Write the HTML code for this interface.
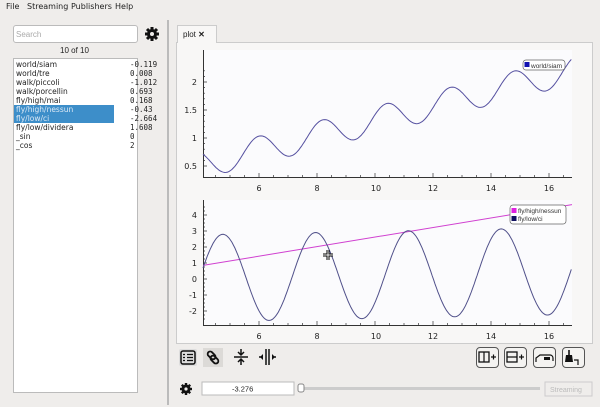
<!DOCTYPE html>
<html><head><meta charset="utf-8"><style>
*{margin:0;padding:0;box-sizing:border-box}
body{width:600px;height:407px;background:#efedeb;font-family:"Liberation Sans",sans-serif;position:relative;overflow:hidden;color:#222}
.a{position:absolute}
.menu span{position:absolute;top:2px;font-size:8px;font-family:"DejaVu Sans",sans-serif}
.list div{position:absolute;left:2px;width:120px;font-size:7.5px;height:9px;line-height:9px;font-family:"DejaVu Sans",sans-serif;white-space:nowrap}
.list span{position:absolute;left:114px;font-family:"DejaVu Sans Mono",monospace;font-size:7.5px}
.sel{background:#3d8ec9;color:#dce9f5;width:100px}
.btn{position:absolute;top:347px;width:23px;height:21px;border:1px solid #555;border-radius:4px;background:#f4f3f1}
</style></head><body>
<div class="menu"><span style="left:6px">File</span><span style="left:27px">Streaming</span><span style="left:71px">Publishers</span><span style="left:115px">Help</span></div>
<div class="a" style="left:13px;top:25px;width:125px;height:18px;background:#fff;border:1px solid #bbb;border-radius:3px;font-size:8px;color:#aaa;padding:4px 2px">Search</div>
<svg class="a" style="left:144px;top:26px" width="16" height="16" viewBox="0 0 16 16"><g fill="#111"><circle cx="8" cy="8" r="5"/><g stroke="#111" stroke-width="3"><line x1="8" y1="1" x2="8" y2="15"/><line x1="1" y1="8" x2="15" y2="8"/><line x1="3" y1="3" x2="13" y2="13"/><line x1="13" y1="3" x2="3" y2="13"/></g></g><circle cx="8" cy="8" r="2" fill="#efedeb"/></svg>
<div class="a" style="left:60px;top:46px;font-size:8px">10 of 10</div>
<div class="a list" style="left:13px;top:58px;width:125px;height:335px;background:#fff;border:1px solid #bbb">
<div style="top:1px">world/siam<span>-0.119</span></div>
<div style="top:10px">world/tre<span>0.008</span></div>
<div style="top:19px">walk/piccoli<span>-1.012</span></div>
<div style="top:28px">walk/porcellin<span>0.693</span></div>
<div style="top:37px">fly/high/mai<span>0.168</span></div>
<div style="top:46px"><b class="a sel" style="left:-2px;top:0;height:9px;font-weight:normal;padding-left:2px">fly/high/nessun</b><span>-0.43</span></div>
<div style="top:55px"><b class="a sel" style="left:-2px;top:0;height:9px;font-weight:normal;padding-left:2px">fly/low/ci</b><span>-2.664</span></div>
<div style="top:64px">fly/low/dividera<span>1.608</span></div>
<div style="top:73px">_sin<span>0</span></div>
<div style="top:82px">_cos<span>2</span></div>
</div>
<div class="a" style="left:167px;top:20px;width:2px;height:385px;background:#bbb"></div>
<div class="a" style="left:176px;top:42px;width:417px;height:302px;background:#f8f7f6;border:1px solid #ccc"></div>
<div class="a" style="left:177px;top:25px;width:40px;height:18px;background:#f8f7f6;border:1px solid #ccc;border-bottom:none;font-size:8px;padding:4px 5px">plot <b>✕</b></div>
<svg class="a" style="left:0;top:0" width="600" height="407">
<rect x="203" y="50" width="369" height="127" fill="#fbfbfd"/>
<rect x="203" y="200" width="369" height="125" fill="#fbfbfd"/>
<g stroke="#333" stroke-width="1" fill="none"><path d="M203.5 50V177.5H572"/><path d="M203.5 200V325.5H572"/></g>
<g font-size="8" font-family="DejaVu Sans" fill="#222" text-anchor="middle">
<text x="259" y="191">6</text><text x="317" y="191">8</text><text x="376" y="191">10</text><text x="433" y="191">12</text><text x="491" y="191">14</text><text x="549" y="191">16</text>
<text x="259" y="339">6</text><text x="317" y="339">8</text><text x="376" y="339">10</text><text x="433" y="339">12</text><text x="491" y="339">14</text><text x="549" y="339">16</text>
</g>
<g font-size="8" font-family="DejaVu Sans" fill="#222" text-anchor="end">
<text x="197" y="85">2</text><text x="197" y="113">1.5</text><text x="197" y="141">1</text><text x="197" y="169">0.5</text>
<text x="197" y="218">4</text><text x="197" y="234">3</text><text x="197" y="250">2</text><text x="197" y="266">1</text><text x="197" y="282">0</text><text x="197" y="298">-1</text><text x="197" y="314">-2</text>
</g>
<g id="ticks"></g>
<polyline id="c1" fill="none" stroke="#5550a0" stroke-width="1"/>
<line x1="203" y1="265.4" x2="572" y2="204.6" stroke="#d040d0" stroke-width="1"/>
<polyline id="c2" fill="none" stroke="#50508a" stroke-width="1"/>
<rect x="523" y="60" width="42" height="10" rx="3" fill="#fff" stroke="#666" stroke-width=".7"/>
<rect x="524.5" y="62" width="5" height="5" fill="#1010b0"/>
<text x="531" y="68" font-size="6.5" fill="#333">world/siam</text>
<rect x="510" y="205" width="56" height="19" rx="3" fill="#fff" stroke="#666" stroke-width=".7"/>
<rect x="511.5" y="208" width="5" height="5" fill="#e020e0"/><text x="518" y="213" font-size="6.5" fill="#333">fly/high/nessun</text>
<rect x="511.5" y="216" width="5" height="5" fill="#101060"/><text x="518" y="221" font-size="6.5" fill="#333">fly/low/ci</text>
<path d="M328 250v10M323 255h10" stroke="#000" stroke-width="3"/><path d="M328 250v10M323 255h10" stroke="#fff" stroke-width="1"/>
<rect x="179" y="349" width="18" height="17" rx="2" fill="#ddd"/>
<rect x="181" y="351" width="14" height="13" rx="2" fill="none" stroke="#111" stroke-width="1.5"/>
<path d="M183 354.5h2M187 354.5h6M183 357.5h2M187 357.5h6M183 360.5h2M187 360.5h6" stroke="#111" stroke-width="1.3"/>
<rect x="203" y="348" width="20" height="19" fill="#dcdad7"/>
<g fill="none" stroke="#111" stroke-width="1.8" transform="rotate(45 213 357.5)"><rect x="206" y="354.5" width="9" height="5" rx="2.5"/><rect x="211" y="355.5" width="9" height="5" rx="2.5"/></g>
<path d="M234 357h14M241 349v5M238 352l3 3 3-3M241 365v-5M238 362l3-3 3 3" stroke="#111" stroke-width="1.5" fill="none"/>
<path d="M266 349v16M269 349v16M259 357h4M272 357h4" stroke="#111" stroke-width="1.5"/><path d="M263 354v6l-3-3zM272 354v6l3-3z" fill="#111"/>
</svg>
<div class="btn" style="left:476px"></div><div class="btn" style="left:504px"></div><div class="btn" style="left:533px"></div><div class="btn" style="left:562px"></div>
<svg class="a" style="left:0;top:0" width="600" height="407">
<rect x="479" y="352" width="10" height="10" fill="none" stroke="#111" stroke-width="1.3"/><path d="M484 352v10M491 357h5M493.5 354.5v5" stroke="#111" stroke-width="1.2"/>
<rect x="507" y="352" width="10" height="10" fill="none" stroke="#111" stroke-width="1.3"/><path d="M507 357h10M519 357h5M521.5 354.5v5" stroke="#111" stroke-width="1.2"/>
<path d="M536 362v-4l4-3h10a3 3 0 0 1 3 3v3" fill="none" stroke="#111" stroke-width="1.2"/><rect x="544" y="357" width="6" height="3" fill="#111"/>
<path d="M569 350v5" stroke="#111" stroke-width="1.6"/><path d="M566 355h6l1 7h-8z" fill="#111"/><path d="M574 360h4v5" stroke="#111" fill="none" stroke-width="1.2"/>
<g fill="#111"><circle cx="186" cy="389" r="4.5"/><g stroke="#111" stroke-width="2.4"><line x1="186" y1="383" x2="186" y2="395"/><line x1="180" y1="389" x2="192" y2="389"/><line x1="181.8" y1="384.8" x2="190.2" y2="393.2"/><line x1="190.2" y1="384.8" x2="181.8" y2="393.2"/></g></g><circle cx="186" cy="389" r="1.6" fill="#efedeb"/>
<rect x="202" y="382" width="92" height="13" fill="#fff" stroke="#bbb"/>
<text x="232" y="391.5" font-size="7.5" fill="#222">-3.276</text>
<rect x="300" y="387" width="240" height="3" fill="#ccc"/>
<rect x="298" y="384" width="6" height="8" rx="2" fill="#fff" stroke="#888"/>
<rect x="545" y="382" width="47" height="14" fill="#efedeb" stroke="#ccc"/>
<text x="550" y="392" font-size="7" fill="#bbb">Streaming</text>
</svg>
<script>
function X(t){return 203+(t-4.07)*29;}
var p1=[],p2=[];
for(var t=4.07;t<=16.8;t+=0.05){
 var v=0.132*t-0.008+0.25*Math.cos(2*Math.PI*(t-6)/2.2);
 var y=194-56*v; if(y<50)y=50; p1.push(X(t).toFixed(1)+","+y.toFixed(1));
 var w=0.1+0.035*(t-5.5)+2.72*Math.cos(2*Math.PI*(t-4.75)/3.2);
 p2.push(X(t).toFixed(1)+","+(279-16*w).toFixed(1));
}
document.getElementById('c1').setAttribute('points',p1.join(' '));
document.getElementById('c2').setAttribute('points',p2.join(' '));
var g=document.getElementById('ticks'),s='';
for(var t=4.5;t<=16.8;t+=0.5){var x=X(t),L=(t%2==0)?4:2;s+='M'+x.toFixed(1)+' 177v'+(-L)+'M'+x.toFixed(1)+' 325v'+(-L);}
for(var v=0.5;v<=2.3;v+=0.1){var y=194-56*v;var L=Math.abs(v*2-Math.round(v*2))<0.01?4:2;s+='M203 '+y.toFixed(1)+'h'+L;}
for(var v=-2.5;v<=4.6;v+=0.25){var y=279-16*v;var L=Math.abs(v-Math.round(v))<0.01?4:2;s+='M203 '+y.toFixed(1)+'h'+L;}
var p=document.createElementNS('http://www.w3.org/2000/svg','path');p.setAttribute('d',s);p.setAttribute('stroke','#333');p.setAttribute('stroke-width','0.7');g.appendChild(p);
</script>
</body></html>
